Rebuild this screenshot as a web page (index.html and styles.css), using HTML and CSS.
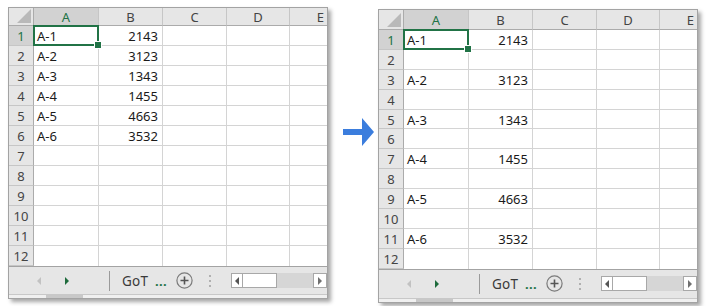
FILE: index.html
```html
<!DOCTYPE html>
<html>
<head>
<meta charset="utf-8">
<link rel="stylesheet" href="styles.css">
</head>
<body>
<div class="page">
  <div class="sheet sheet-left">
    <div class="grid">
      <div class="hd corner"></div>
      <div class="hd col sel">A</div><div class="hd col">B</div><div class="hd col">C</div><div class="hd col">D</div><div class="hd col e">E</div>

      <div class="hd row sel">1</div><div class="c active">A-1</div><div class="c n">2143</div><div class="c"></div><div class="c"></div><div class="c"></div>
      <div class="hd row">2</div><div class="c">A-2</div><div class="c n">3123</div><div class="c"></div><div class="c"></div><div class="c"></div>
      <div class="hd row">3</div><div class="c">A-3</div><div class="c n">1343</div><div class="c"></div><div class="c"></div><div class="c"></div>
      <div class="hd row">4</div><div class="c">A-4</div><div class="c n">1455</div><div class="c"></div><div class="c"></div><div class="c"></div>
      <div class="hd row">5</div><div class="c">A-5</div><div class="c n">4663</div><div class="c"></div><div class="c"></div><div class="c"></div>
      <div class="hd row">6</div><div class="c">A-6</div><div class="c n">3532</div><div class="c"></div><div class="c"></div><div class="c"></div>
      <div class="hd row">7</div><div class="c"></div><div class="c"></div><div class="c"></div><div class="c"></div><div class="c"></div>
      <div class="hd row">8</div><div class="c"></div><div class="c"></div><div class="c"></div><div class="c"></div><div class="c"></div>
      <div class="hd row">9</div><div class="c"></div><div class="c"></div><div class="c"></div><div class="c"></div><div class="c"></div>
      <div class="hd row">10</div><div class="c"></div><div class="c"></div><div class="c"></div><div class="c"></div><div class="c"></div>
      <div class="hd row">11</div><div class="c"></div><div class="c"></div><div class="c"></div><div class="c"></div><div class="c"></div>
      <div class="hd row">12</div><div class="c"></div><div class="c"></div><div class="c"></div><div class="c"></div><div class="c"></div>
    </div>
    <div class="tabbar">
      <div class="nav">
        <span class="tri tri-left"></span>
        <span class="tri tri-right"></span>
      </div>
      <div class="sep"></div>
      <span class="tabname">GoT</span>
      <span class="more">...</span>
      <span class="plus">
        <svg width="17" height="17" viewBox="0 0 17 17"><circle cx="8.5" cy="8.5" r="7.6" fill="none" stroke="#7b7b7b" stroke-width="1.2"/><path d="M8.5 4.5v8M4.5 8.5h8" stroke="#555" stroke-width="1.6"/></svg>
      </span>
      <span class="vdots"><i></i><i></i><i></i></span>
      <div class="hscroll">
        <span class="sbtn"><span class="stri stri-left"></span></span>
        <span class="thumb"></span>
        <span class="track"></span>
        <span class="sbtn"><span class="stri stri-right"></span></span>
      </div>
    </div>
    <div class="strip"><span class="strip-thumb"></span></div>
  </div>

  <svg class="arrow" width="31" height="28" viewBox="0 0 31 28"><polygon points="0,11 19,11 19,0 31,14 19,28 19,17 0,17" fill="#3b7ddd"/></svg>

  <div class="sheet sheet-right">
    <div class="grid">
      <div class="hd corner"></div>
      <div class="hd col sel">A</div><div class="hd col">B</div><div class="hd col">C</div><div class="hd col">D</div><div class="hd col e">E</div>

      <div class="hd row sel">1</div><div class="c active">A-1</div><div class="c n">2143</div><div class="c"></div><div class="c"></div><div class="c"></div>
      <div class="hd row">2</div><div class="c"></div><div class="c"></div><div class="c"></div><div class="c"></div><div class="c"></div>
      <div class="hd row">3</div><div class="c">A-2</div><div class="c n">3123</div><div class="c"></div><div class="c"></div><div class="c"></div>
      <div class="hd row">4</div><div class="c"></div><div class="c"></div><div class="c"></div><div class="c"></div><div class="c"></div>
      <div class="hd row">5</div><div class="c">A-3</div><div class="c n">1343</div><div class="c"></div><div class="c"></div><div class="c"></div>
      <div class="hd row">6</div><div class="c"></div><div class="c"></div><div class="c"></div><div class="c"></div><div class="c"></div>
      <div class="hd row">7</div><div class="c">A-4</div><div class="c n">1455</div><div class="c"></div><div class="c"></div><div class="c"></div>
      <div class="hd row">8</div><div class="c"></div><div class="c"></div><div class="c"></div><div class="c"></div><div class="c"></div>
      <div class="hd row">9</div><div class="c">A-5</div><div class="c n">4663</div><div class="c"></div><div class="c"></div><div class="c"></div>
      <div class="hd row">10</div><div class="c"></div><div class="c"></div><div class="c"></div><div class="c"></div><div class="c"></div>
      <div class="hd row">11</div><div class="c">A-6</div><div class="c n">3532</div><div class="c"></div><div class="c"></div><div class="c"></div>
      <div class="hd row">12</div><div class="c"></div><div class="c"></div><div class="c"></div><div class="c"></div><div class="c"></div>
    </div>
    <div class="tabbar">
      <div class="nav">
        <span class="tri tri-left"></span>
        <span class="tri tri-right"></span>
      </div>
      <div class="sep"></div>
      <span class="tabname">GoT</span>
      <span class="more">...</span>
      <span class="plus">
        <svg width="17" height="17" viewBox="0 0 17 17"><circle cx="8.5" cy="8.5" r="7.6" fill="none" stroke="#7b7b7b" stroke-width="1.2"/><path d="M8.5 4.5v8M4.5 8.5h8" stroke="#555" stroke-width="1.6"/></svg>
      </span>
      <span class="vdots"><i></i><i></i><i></i></span>
      <div class="hscroll">
        <span class="sbtn"><span class="stri stri-left"></span></span>
        <span class="thumb"></span>
        <span class="track"></span>
        <span class="sbtn"><span class="stri stri-right"></span></span>
      </div>
    </div>
    <div class="strip"><span class="strip-thumb"></span></div>
  </div>
</div>
</body>
</html>
```

FILE: styles.css
```css
* { box-sizing: border-box; }
html, body { margin: 0; padding: 0; background: #ffffff; }
body {
  font-family: "Noto Sans", "Open Sans", sans-serif;
  color: #1a1a1a;
}
.page {
  display: flex;
  align-items: flex-start;
  width: 707px;
  height: 306px;
}
.sheet {
  width: 320px;
  border: 1px solid #a3a3a3;
  background: #ffffff;
  box-shadow: 3px 3px 4px rgba(0, 0, 0, 0.35);
}
.sheet-left { margin-left: 8px; margin-top: 7px; }
.sheet-right { margin-left: 4px; margin-top: 9px; }
.arrow { margin-left: 15px; margin-top: 118px; flex: none; }

.grid {
  display: grid;
  grid-template-columns: 25px 65px 64px 64px 63px 37px;
  grid-template-rows: 18px repeat(12, 20px);
}
.sheet-right .grid { grid-template-rows: 20px repeat(12, 19.9px); }

.hd {
  background: #e6e6e6;
  color: #444444;
  font-size: 13px;
  display: flex;
  align-items: center;
  justify-content: center;
  border-right: 1px solid #c6c6c6;
  border-bottom: 1px solid #c6c6c6;
}
.hd.col { border-bottom-color: #ababab; }
.hd.row { border-right-color: #ababab; padding-top: 1px; }
.hd.sel { background: #d2d2d2; color: #217346; }
.hd.e { border-right: none; justify-content: flex-end; padding-right: 3px; }
.corner {
  position: relative;
  border-right-color: #ababab;
  border-bottom-color: #ababab;
}
.corner::after {
  content: "";
  position: absolute;
  right: 2px;
  bottom: 2px;
  width: 14px;
  height: 14px;
  background: #b9b9b9;
  clip-path: polygon(100% 0, 100% 100%, 0 100%);
}

.c {
  font-size: 13px;
  border-right: 1px solid #d4d4d4;
  border-bottom: 1px solid #d4d4d4;
  display: flex;
  align-items: center;
  padding: 1px 3px 0 3px;
  white-space: nowrap;
}
.c:nth-child(6n) { border-right: none; }
.grid .c:nth-last-child(-n+5) { border-bottom: none; }
.c.n { justify-content: flex-end; padding-right: 4px; }
.c.active { position: relative; }
.c.active::after {
  content: "";
  position: absolute;
  left: -1px;
  top: -1px;
  right: -1px;
  bottom: -1px;
  border: 2px solid #217346;
}
.c.active::before {
  content: "";
  position: absolute;
  right: -4px;
  bottom: -4px;
  width: 6px;
  height: 6px;
  background: #217346;
  border: 1px solid #ffffff;
  z-index: 2;
}

.tabbar {
  height: 28px;
  background: #e6e6e6;
  border-top: 1px solid #a3a3a3;
  display: flex;
  align-items: center;
}
.sheet-right .tabbar { height: 29px; }
.nav {
  width: 100px;
  display: flex;
  align-items: center;
  padding-left: 28px;
}
.tri {
  width: 0;
  height: 0;
  border-top: 4px solid transparent;
  border-bottom: 4px solid transparent;
}
.tri-left { border-right: 4px solid #c2c2c2; }
.tri-right { border-left: 4px solid #1e6b3c; margin-left: 24px; }
.sep {
  width: 1px;
  height: 20px;
  background: #9a9a9a;
}
.tabname {
  margin-left: 12px;
  font-size: 13.5px;
  color: #3a3a3a;
  letter-spacing: 0.2px;
}
.more {
  margin-left: 7px;
  font-size: 13px;
  font-weight: bold;
  color: #217346;
  letter-spacing: 0.3px;
  line-height: 1;
  padding-top: 2px;
}
.plus { margin-left: 9px; display: flex; }
.vdots {
  margin-left: 16px;
  display: flex;
  flex-direction: column;
  gap: 3px;
}
.vdots i {
  display: block;
  width: 2px;
  height: 2px;
  background: #b0b0b0;
}
.hscroll {
  margin-left: 20px;
  display: flex;
  height: 15px;
  flex: 1;
}
.sbtn {
  width: 12px;
  background: #ffffff;
  border: 1px solid #a8a8a8;
  display: flex;
  align-items: center;
  justify-content: center;
}
.sbtn:last-child { width: 14px; }
.thumb {
  width: 34px;
  background: #ffffff;
  border: 1px solid #a8a8a8;
  border-left: none;
}
.track { flex: 1; background: #d6d6d6; }
.stri {
  width: 0;
  height: 0;
  border-top: 4px solid transparent;
  border-bottom: 4px solid transparent;
}
.stri-left { border-right: 4px solid #555555; }
.stri-right { border-left: 4px solid #707070; }

.strip {
  height: 4px;
  background: #f0f0f0;
  border-top: 1px solid #c8c8c8;
  padding-left: 37px;
}
.strip-thumb {
  display: block;
  width: 37px;
  height: 3px;
  background: #c8c8c8;
}
```
